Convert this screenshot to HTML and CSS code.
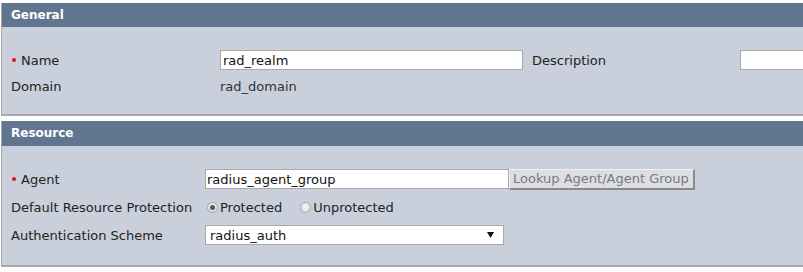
FILE: index.html
```html
<!DOCTYPE html>
<html>
<head>
<meta charset="utf-8">
<link rel="stylesheet" href="styles.css">
</head>
<body>
<div class="panel first">
  <div class="panel-head">General</div>
  <div class="panel-body general">
    <div class="lbl"><span class="req"></span>Name</div>
    <div class="val"><input class="txt name-in" type="text" value="rad_realm"></div>
    <div class="lbl lbl2">Description</div>
    <div class="val"><input class="txt desc-in" type="text" value=""></div>
    <div class="lbl">Domain</div>
    <div class="val plain">rad_domain</div>
    <div></div>
    <div></div>
  </div>
</div>
<div class="panel second">
  <div class="panel-head">Resource</div>
  <div class="panel-body resource">
    <div class="lbl"><span class="req"></span>Agent</div>
    <div class="val"><input class="txt agent-in" type="text" value="radius_agent_group"><button class="lookup" type="button">Lookup Agent/Agent Group</button></div>
    <div class="lbl">Default Resource Protection</div>
    <div class="val radios">
      <label class="radio"><span class="dot on"></span>Protected</label>
      <label class="radio second-radio"><span class="dot"></span>Unprotected</label>
    </div>
    <div class="lbl">Authentication Scheme</div>
    <div class="val"><div class="select"><span>radius_auth</span><svg class="arrow" width="7" height="6" viewBox="0 0 7 6"><path d="M0 0H7L3.5 6Z" fill="#111"/></svg></div></div>
  </div>
</div>
</body>
</html>
```
FILE: styles.css
```css
html, body {
  margin: 0;
  padding: 0;
  overflow: hidden;
  background: #ffffff;
}
body {
  font-family: "DejaVu Sans", Verdana, sans-serif;
  font-size: 13px;
  color: #222;
}
.panel {
  margin-left: 1px;
  border-left: 1px solid #a8a8a8;
  border-bottom: 2px solid #a8a8a8;
  background: #c9d0db;
  overflow: hidden;
}
.first { margin-top: 3px; }
.second { margin-top: 5px; }
.panel-head {
  height: 24px;
  line-height: 24px;
  background: #617591;
  color: #ffffff;
  font-weight: bold;
  font-size: 12px;
  padding-left: 9px;
}
.second .panel-head { height: 25px; line-height: 25px; }
.panel-body {
  display: grid;
  padding-left: 9px;
}
.general {
  grid-template-columns: 209px 303px 217px 300px;
  grid-auto-rows: 26px;
  padding-top: 20px;
  padding-bottom: 15px;
}
.resource {
  grid-template-columns: 194px 590px;
  grid-auto-rows: 28px;
  padding-top: 19px;
  padding-bottom: 16px;
}
.lbl, .val {
  display: flex;
  align-items: center;
}
.lbl2 { padding-left: 9px; }
.req {
  width: 4px;
  height: 4px;
  border-radius: 50%;
  background: #e0101a;
  margin-left: 1px;
  margin-right: 5px;
}
.plain { color: #333; }
.txt {
  box-sizing: border-box;
  height: 20px;
  border: 1px solid #a9a9a9;
  background: #fff;
  font-family: "DejaVu Sans", Verdana, sans-serif;
  font-size: 13px;
  color: #111;
  margin: 0;
  padding: 0 0 0 2px;
  outline: none;
}
.name-in { width: 303px; }
.desc-in { width: 300px; }
.agent-in { width: 304px; padding-left: 1px; }
.lookup {
  box-sizing: border-box;
  height: 21px;
  width: 186px;
  margin: 0;
  padding: 0 0 0 3px;
  text-align: left;
  background: #dcdee2;
  color: #7a7a7a;
  font-family: "DejaVu Sans", Verdana, sans-serif;
  font-size: 13px;
  border-top: 1px solid #f0f0f0;
  border-left: 1px solid #f0f0f0;
  border-right: 2px solid #8a8a8a;
  border-bottom: 2px solid #8a8a8a;
}
.radio {
  display: flex;
  align-items: center;
  color: #222;
}
.dot {
  box-sizing: border-box;
  width: 11px;
  height: 11px;
  border-radius: 50%;
  border: 1px solid #a4a8ae;
  background: radial-gradient(circle at 50% 40%, #f4f4f4 0%, #d4d6da 100%);
  margin-left: 2px;
  margin-right: 2px;
  display: flex;
  align-items: center;
  justify-content: center;
}
.dot.on::after {
  content: "";
  width: 5px;
  height: 5px;
  border-radius: 50%;
  background: #555;
}
.second-radio { margin-left: 16px; }
.select {
  box-sizing: border-box;
  width: 299px;
  height: 20px;
  border: 1px solid #a9a9a9;
  background: #fff;
  color: #111;
  display: flex;
  align-items: center;
  justify-content: space-between;
  padding-left: 4px;
  padding-right: 9px;
}
.arrow { display: block; }
```
